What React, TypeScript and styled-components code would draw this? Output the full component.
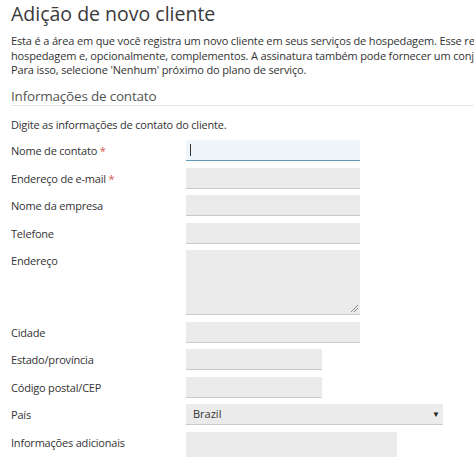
import React from "react";
import styled, { createGlobalStyle } from "styled-components";

const Global = createGlobalStyle`
  html, body { margin: 0; padding: 0; background: #fff; overflow: hidden; }
  body { font-family: "Open Sans", "Noto Sans", Arial, sans-serif; color: #333; }
`;

const Page = styled.div`
  padding: 0 0 0 11px;
  width: 700px;
`;

const Title = styled.h1`
  margin: 0;
  padding-top: 1px;
  font-size: 19.5px;
  font-weight: 400;
  line-height: 25px;
  color: #3a3a3a;
`;

const Intro = styled.p`
  margin: 8px 0 0;
  font-size: 11px;
  letter-spacing: -0.15px;
  line-height: 14.5px;
  white-space: nowrap;
  color: #333;
`;

const SectionTitle = styled.h2`
  margin: 10.5px 0 0;
  font-size: 13.5px;
  letter-spacing: -0.2px;
  font-weight: 400;
  line-height: 16px;
  color: #555;
  padding-bottom: 1px;
  border-bottom: 1px solid #e4e4e4;
`;

const Description = styled.p`
  margin: 10.5px 0 0;
  font-size: 11px;
  letter-spacing: -0.2px;
  line-height: 15px;
  color: #333;
`;

const Form = styled.div`
  margin-top: 8.5px;
  display: flex;
  flex-direction: column;
  gap: 6.5px;
`;

const Row = styled.div`
  display: flex;
  align-items: flex-start;
`;

const Label = styled.label`
  width: 175px;
  flex: none;
  font-size: 11px;
  letter-spacing: -0.2px;
  line-height: 21px;
  color: #333;
`;

const Required = styled.span`
  color: #d9534f;
`;

const Field = styled.div<{ $w: number; $h?: number; $focus?: boolean }>`
  box-sizing: border-box;
  width: ${(p) => p.$w}px;
  height: ${(p) => p.$h ?? 21}px;
  background: ${(p) => (p.$focus ? "#eef5fb" : "#ebebeb")};
  border-bottom: 1px solid ${(p) => (p.$focus ? "#5d9bb5" : "#c9c9c9")};
  position: relative;
  font-size: 11px;
  line-height: 20px;
  color: #333;
  padding-left: 7px;
`;

const Caret = styled.span`
  position: absolute;
  left: 4px;
  top: 4px;
  width: 1px;
  height: 12px;
  background: #333;
`;

const Resize = styled.svg`
  position: absolute;
  right: 1px;
  bottom: 1px;
`;

const Arrow = styled.span`
  position: absolute;
  right: 3px;
  top: 0;
  font-size: 8px;
  line-height: 20px;
  color: #222;
`;

export default function App() {
  return (
    <>
      <Global />
      <Page>
        <Title>Adição de novo cliente</Title>
        <Intro>
          Esta é a área em que você registra um novo cliente em seus serviços de hospedagem. Esse registro inclui a criação de uma conta de cliente e uma assinatura de plano de serviço de
          <br />
          hospedagem e, opcionalmente, complementos. A assinatura também pode fornecer um conjunto de recursos ao cliente. Você também pode criar um cliente sem assinatura.
          <br />
          Para isso, selecione 'Nenhum' próximo do plano de serviço.
        </Intro>
        <SectionTitle>Informações de contato</SectionTitle>
        <Description>Digite as informações de contato do cliente.</Description>
        <Form>
          <Row>
            <Label>
              Nome de contato <Required>*</Required>
            </Label>
            <Field $w={174} $focus>
              <Caret />
            </Field>
          </Row>
          <Row>
            <Label>
              Endereço de e-mail <Required>*</Required>
            </Label>
            <Field $w={174} />
          </Row>
          <Row>
            <Label>Nome da empresa</Label>
            <Field $w={174} />
          </Row>
          <Row>
            <Label>Telefone</Label>
            <Field $w={174} />
          </Row>
          <Row>
            <Label>Endereço</Label>
            <Field $w={174} $h={65}>
              <Resize width="10" height="10" viewBox="0 0 10 10">
                <line x1="9" y1="2" x2="2" y2="9" stroke="#888" strokeWidth="1" />
                <line x1="9" y1="5" x2="5" y2="9" stroke="#888" strokeWidth="1" />
              </Resize>
            </Field>
          </Row>
          <Row>
            <Label>Cidade</Label>
            <Field $w={174} />
          </Row>
          <Row>
            <Label>Estado/província</Label>
            <Field $w={136} />
          </Row>
          <Row>
            <Label>Código postal/CEP</Label>
            <Field $w={136} />
          </Row>
          <Row>
            <Label>País</Label>
            <Field $w={257}>
              Brazil
              <Arrow>▼</Arrow>
            </Field>
          </Row>
          <Row>
            <Label>Informações adicionais</Label>
            <Field $w={211} $h={40} />
          </Row>
        </Form>
      </Page>
    </>
  );
}
